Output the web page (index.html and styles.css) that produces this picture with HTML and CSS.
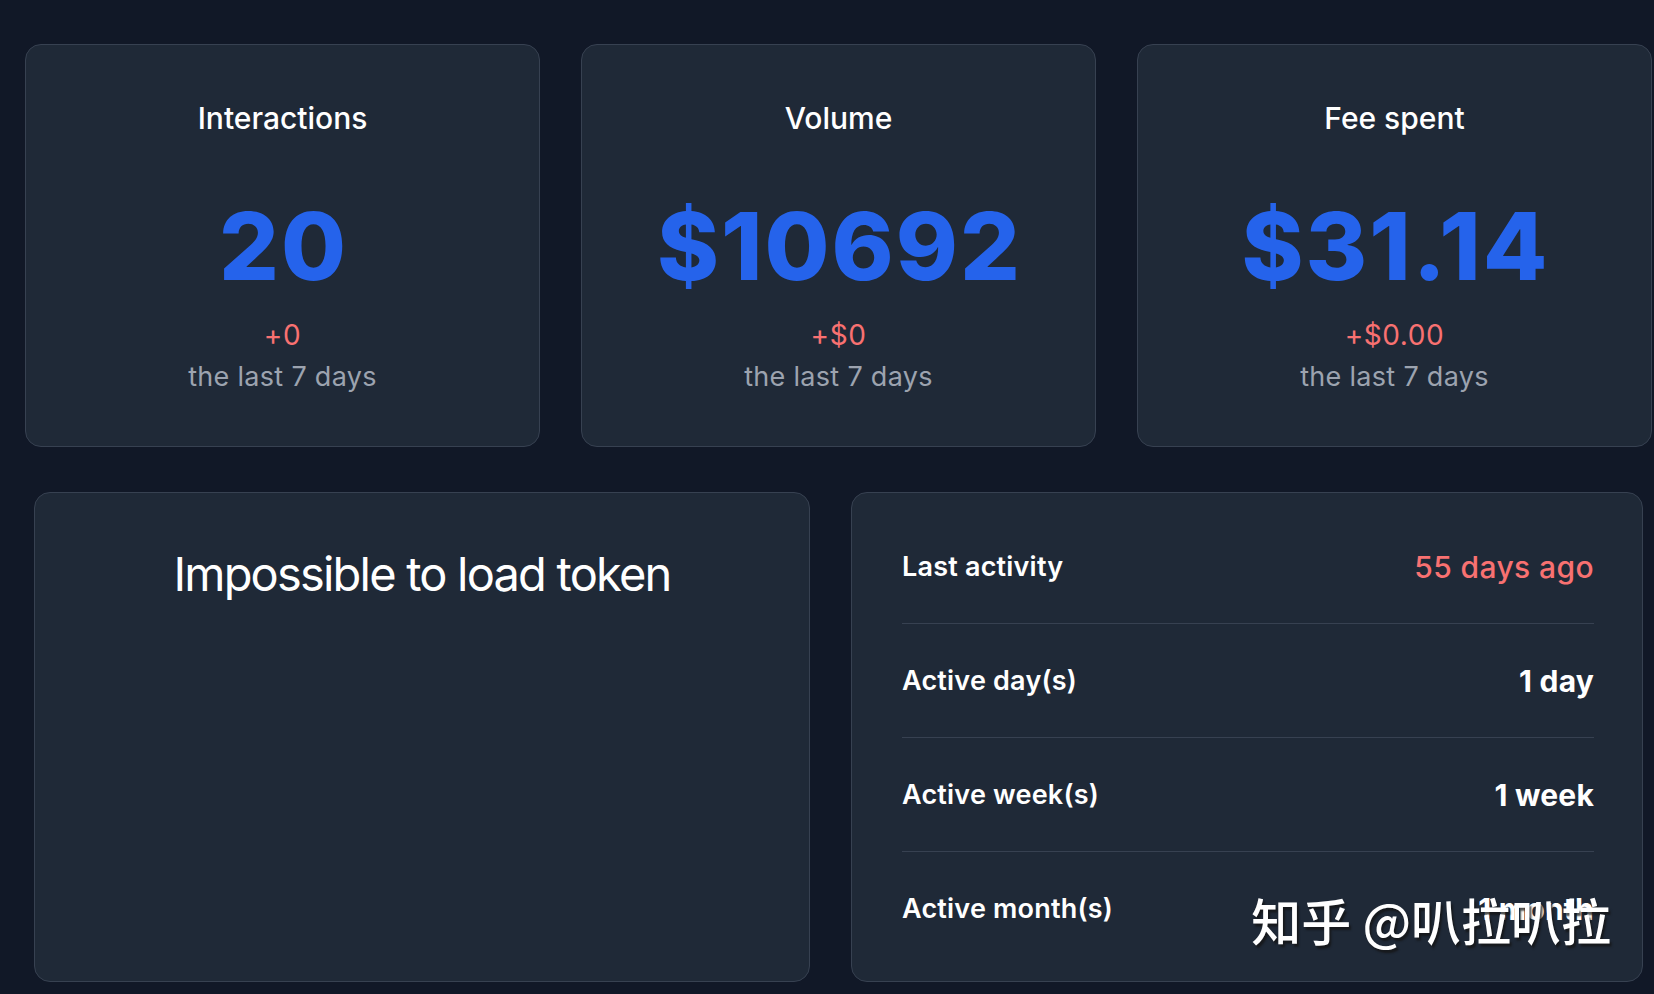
FILE: index.html
```html
<!DOCTYPE html>
<html lang="en">
<head>
<meta charset="utf-8">
<title>Wallet stats</title>
<link rel="stylesheet" href="styles.css">
</head>
<body>
<div class="page">
  <section class="stats">
    <div class="card stat">
      <h2 class="stat-title">Interactions</h2>
      <div class="stat-value">20</div>
      <div class="stat-change">+0</div>
      <div class="stat-period">the last 7 days</div>
    </div>
    <div class="card stat">
      <h2 class="stat-title">Volume</h2>
      <div class="stat-value">$10692</div>
      <div class="stat-change">+$0</div>
      <div class="stat-period">the last 7 days</div>
    </div>
    <div class="card stat">
      <h2 class="stat-title">Fee spent</h2>
      <div class="stat-value">$31.14</div>
      <div class="stat-change">+$0.00</div>
      <div class="stat-period">the last 7 days</div>
    </div>
  </section>
  <section class="details">
    <div class="card token">
      <h2 class="token-msg">Impossible to load token</h2>
    </div>
    <div class="card activity">
      <div class="rows">
        <div class="row"><span class="label">Last activity</span><span class="value value-red">55 days ago</span></div>
        <div class="row"><span class="label">Active day(s)</span><span class="value">1 day</span></div>
        <div class="row"><span class="label">Active week(s)</span><span class="value">1 week</span></div>
        <div class="row"><span class="label">Active month(s)</span><span class="value">1 month</span></div>
      </div>
      <div class="watermark">知乎 @叭拉叭拉</div>
    </div>
  </section>
</div>
</body>
</html>
```
FILE: styles.css
```css
html, body {
  margin: 0;
  padding: 0;
}

body {
  background: #111827;
  font-family: Inter, "Noto Sans", "Noto Sans CJK SC", sans-serif;
  color: #ffffff;
  width: 1654px;
  height: 994px;
  overflow: hidden;
}

.page {
  padding-top: 44px;
}

.card {
  background: #1f2937;
  border: 1px solid #374151;
  border-radius: 16px;
  box-sizing: border-box;
}

.stats {
  display: grid;
  grid-template-columns: repeat(3, 1fr);
  gap: 41px;
  padding: 0 2px 0 25px;
}

.stat {
  text-align: center;
  padding: 55px 0 49px;
}

.stat-title {
  margin: 0;
  font-size: 30px;
  font-weight: 500;
  line-height: 37px;
  color: #ffffff;
}

.stat-value {
  margin-top: 62px;
  font-size: 94px;
  font-weight: 800;
  line-height: 94px;
  color: #2563eb;
  letter-spacing: 2px;
  text-indent: 2px;
}

.stat-change {
  margin-top: 21px;
  font-size: 28px;
  line-height: 42px;
  color: #f87171;
  letter-spacing: 0.6px;
}

.stat-period {
  font-size: 27px;
  line-height: 41px;
  color: #9ca3af;
  letter-spacing: 0.3px;
}

.details {
  display: grid;
  grid-template-columns: 776fr 792fr;
  gap: 41px;
  padding: 45px 11px 13px 34px;
}

.token {
  text-align: center;
  padding-top: 53px;
}

.token-msg {
  margin: 0;
  font-size: 47px;
  font-weight: 400;
  line-height: 56px;
  color: #ffffff;
  letter-spacing: -1.8px;
}

.activity {
  position: relative;
  padding: 17px 48px 16px 50px;
}

.row {
  display: flex;
  justify-content: space-between;
  align-items: center;
  height: 113px;
  border-bottom: 1px solid #374151;
}

.row:last-child {
  border-bottom: none;
}

.label {
  font-size: 27px;
  font-weight: 600;
  letter-spacing: 0.2px;
}

.value {
  font-size: 30px;
  font-weight: 700;
  letter-spacing: 0.2px;
}

.value-red {
  font-size: 30px;
  font-weight: 500;
  color: #f87171;
  letter-spacing: 0.4px;
}

.watermark {
  position: absolute;
  right: 31px;
  top: 399px;
  font-family: "Noto Sans CJK SC", sans-serif;
  font-size: 50px;
  font-weight: 500;
  line-height: 54px;
  color: #ffffff;
  white-space: nowrap;
  text-shadow: 2px 3px 2px rgba(20, 20, 20, 0.75);
}
```
